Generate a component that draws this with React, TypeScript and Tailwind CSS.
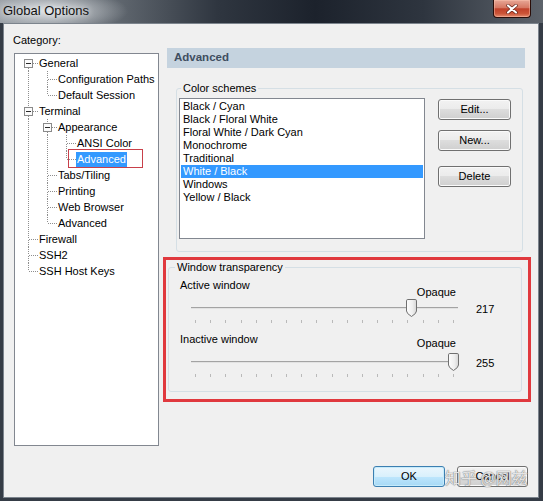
import React from "react";

type Row = {
  t: string;
  l: number;
  exp?: boolean;
  next: boolean;
  anc: boolean[];
  first?: boolean;
  sel?: boolean;
};

const ROWS: Row[] = [
  { t: "General", l: 0, exp: true, next: true, anc: [], first: true },
  { t: "Configuration Paths", l: 1, next: true, anc: [true] },
  { t: "Default Session", l: 1, next: false, anc: [true] },
  { t: "Terminal", l: 0, exp: true, next: true, anc: [] },
  { t: "Appearance", l: 1, exp: true, next: true, anc: [true] },
  { t: "ANSI Color", l: 2, next: true, anc: [true, true] },
  { t: "Advanced", l: 2, next: false, anc: [true, true], sel: true },
  { t: "Tabs/Tiling", l: 1, next: true, anc: [true] },
  { t: "Printing", l: 1, next: true, anc: [true] },
  { t: "Web Browser", l: 1, next: true, anc: [true] },
  { t: "Advanced", l: 1, next: false, anc: [true] },
  { t: "Firewall", l: 0, next: true, anc: [] },
  { t: "SSH2", l: 0, next: true, anc: [] },
  { t: "SSH Host Keys", l: 0, next: false, anc: [] },
];

const DOT = { stroke: "#8e8e8e", strokeWidth: 1, strokeDasharray: "1 1", shapeRendering: "crispEdges" as const };

function GuideCell({ on }: { on: boolean }) {
  return (
    <svg width="19" height="16" className="shrink-0">
      {on && <line x1="9.5" y1="0" x2="9.5" y2="16" {...DOT} />}
    </svg>
  );
}

function OwnCell({ row }: { row: Row }) {
  return (
    <svg width="19" height="16" className="shrink-0">
      {!row.first && <line x1="9.5" y1="0" x2="9.5" y2="8" {...DOT} />}
      {row.next && <line x1="9.5" y1="9" x2="9.5" y2="16" {...DOT} />}
      <line x1={row.exp ? 14 : 10} y1="8.5" x2="19" y2="8.5" {...DOT} />
      {row.exp && (
        <g shapeRendering="crispEdges">
          <rect x="5.5" y="4.5" width="8" height="8" fill="#fbfbfb" stroke="#8a8a8a" />
          <line x1="7" y1="8.5" x2="12" y2="8.5" stroke="#2a2a2a" />
        </g>
      )}
    </svg>
  );
}

function TreeRow({ row }: { row: Row }) {
  return (
    <div className="flex h-[16px] items-center">
      <div className="w-[4px] shrink-0" />
      {row.anc.map((a, k) => (
        <GuideCell key={k} on={a} />
      ))}
      <OwnCell row={row} />
      <span
        className={
          row.sel
            ? "relative h-[15px] pl-[1px] pr-[1px] leading-[15px] whitespace-nowrap bg-[#3399ff] text-white"
            : "relative h-[15px] pl-[1px] pr-[1px] leading-[15px] whitespace-nowrap text-black"
        }
      >
        {row.t}
        {row.sel && (
          <span className="absolute left-[-8px] right-[-16px] top-[-3px] bottom-[-1px] border border-[#c8404a]" />
        )}
      </span>
    </div>
  );
}

function Btn({ children, w, primary }: { children: React.ReactNode; w: string; primary?: boolean }) {
  return (
    <div
      className={
        (primary
          ? "border-[#3c7fb1] bg-[linear-gradient(180deg,#eaf6fd_0%,#d9f0fc_50%,#bee6fd_50%,#a7d9f5_100%)] shadow-[inset_0_0_0_1px_#c6ebfb] "
          : "border-[#707070] bg-[linear-gradient(180deg,#f2f2f2_0%,#ebebeb_50%,#dddddd_50%,#cfcfcf_100%)] shadow-[inset_0_0_0_1px_#fafafa] ") +
        w +
        " h-[21px] shrink-0 rounded-[3px] border flex items-center justify-center text-[11px] text-black"
      }
    >
      {children}
    </div>
  );
}

function Thumb({ id }: { id: string }) {
  return (
    <svg width="11" height="18" viewBox="0 0 11 18">
      <defs>
        <linearGradient id={id} x1="0" y1="0" x2="1" y2="0">
          <stop offset="0" stopColor="#fefefe" />
          <stop offset="0.6" stopColor="#eeeeee" />
          <stop offset="1" stopColor="#d6d6d6" />
        </linearGradient>
      </defs>
      <path
        d="M1.8 0.5 H9.2 Q10.5 0.5 10.5 1.8 V12 Q10.5 14.5 5.5 17.5 Q0.5 14.5 0.5 12 V1.8 Q0.5 0.5 1.8 0.5 Z"
        fill={`url(#${id})`}
        stroke="#707070"
      />
    </svg>
  );
}

function SliderBlock({
  label,
  value,
  opaqueMt,
  rowMt,
  id,
}: {
  label: string;
  value: number;
  opaqueMt: string;
  rowMt: string;
  id: string;
}) {
  const center = 6 + ((value - 20) / 235) * 258;
  return (
    <div className="flex flex-col">
      <div className="flex w-[276px] items-start">
        <span className="leading-[14px]">{label}</span>
        <span className={"ml-auto leading-[13px] " + opaqueMt}>Opaque</span>
      </div>
      <div className={"flex items-center " + rowMt}>
        <div className="relative ml-[9px] h-[18px] w-[271px] shrink-0">
          <div className="ml-[2px] mt-[8px] h-[2px] w-[267px] border-t border-[#a3a3a3] bg-[#e2e2e2]" />
          <div className="absolute top-0" style={{ left: center - 5.5 }}>
            <Thumb id={id} />
          </div>
        </div>
        <span className="ml-[16px] pt-[2px] leading-[14px]">{value}</span>
      </div>
      <div className="ml-[9px] mt-[3px] flex h-[3px] w-[271px] justify-between px-[6px]">
        {Array.from({ length: 18 }).map((_, i) => (
          <div key={i} className="h-[3px] w-px bg-[#b9b9b9]" />
        ))}
      </div>
    </div>
  );
}

const SCHEMES = [
  "Black / Cyan",
  "Black / Floral White",
  "Floral White / Dark Cyan",
  "Monochrome",
  "Traditional",
  "White / Black",
  "Windows",
  "Yellow / Black",
];

export default function App() {
  return (
    <div className="flex h-[501px] w-[543px] flex-col overflow-hidden bg-[#353c46] [font-family:'Liberation_Sans',Arial,sans-serif] text-[11px] text-black">
      {/* Title bar */}
      <div className="flex h-[23px] shrink-0 items-start bg-[radial-gradient(ellipse_80px_22px_at_48px_11px,rgba(226,230,233,0.95),rgba(226,230,233,0)),linear-gradient(90deg,#8a9097_0%,#5f666e_22%,#2f3640_40%,#1c222c_58%,#2e353f_78%,#5d636b_100%)]">
        <span className="pl-[3px] pt-[2px] text-[13px] leading-[17px] text-[#111] [text-shadow:0_0_6px_rgba(255,255,255,0.9)]">
          Global Options
        </span>
        <div className="ml-auto mr-[12px] flex h-[18px] w-[38px] items-center justify-center rounded-b-[4px] border border-t-0 border-[#2a0d08] bg-[linear-gradient(180deg,#e7a796_0%,#d67863_45%,#c0412a_52%,#cc5538_80%,#e48c70_100%)] shadow-[inset_0_0_0_1px_rgba(255,200,180,0.45)]">
          <svg width="12" height="10" viewBox="0 0 12 10">
            <path d="M2 1.5 L10 8.5 M10 1.5 L2 8.5" stroke="#5a1a10" strokeWidth="3.4" strokeLinecap="round" />
            <path d="M2 1.5 L10 8.5 M10 1.5 L2 8.5" stroke="#ffffff" strokeWidth="2.2" strokeLinecap="round" />
          </svg>
        </div>
      </div>

      {/* Body */}
      <div className="relative mb-[3px] ml-[3px] mr-[4px] flex flex-1 flex-col border border-[#7c848d] bg-[#f0f0f0]">
        <div className="flex items-start">
          {/* Left column */}
          <div className="flex flex-col pl-[9px] pt-[9px]">
            <span className="leading-[14px]">Category:</span>
            <div className="ml-[1px] mt-[6px] h-[393px] w-[145px] border border-[#828790] bg-white pt-[1px]">
              {ROWS.map((r, i) => (
                <TreeRow key={i} row={r} />
              ))}
            </div>
          </div>

          {/* Right column */}
          <div className="ml-[4px] flex w-[368px] flex-col pt-[24px]">
            <div className="ml-[4px] flex h-[20px] w-[358px] items-center bg-[#c5d3df] pl-[7px] text-[11.5px] font-bold text-[#3f4e5f]">
              Advanced
            </div>

            <fieldset className="ml-[13px] mt-[13px] w-[347px] rounded-[3px] border border-[#d5dfe5]">
              <legend className="ml-[4px] px-[2px] leading-[14px]">Color schemes</legend>
              <div className="flex items-start pb-[12px] pl-[2px] pt-[3px]">
                <div className="h-[141px] w-[246px] shrink-0 border border-[#828790] bg-white pt-[1px]">
                  {SCHEMES.map((s) => (
                    <div
                      key={s}
                      className={
                        s === "White / Black"
                          ? "mx-[1px] h-[13px] bg-[#3399ff] pl-[2px] leading-[13px] text-white"
                          : "mx-[1px] h-[13px] pl-[2px] leading-[13px]"
                      }
                    >
                      {s}
                    </div>
                  ))}
                </div>
                <div className="ml-[13px] mt-[1px] flex flex-col">
                  <Btn w="w-[73px]">Edit...</Btn>
                  <div className="mt-[10px]">
                    <Btn w="w-[73px]">New...</Btn>
                  </div>
                  <div className="mt-[15px]">
                    <Btn w="w-[73px]">Delete</Btn>
                  </div>
                </div>
              </div>
            </fieldset>

            <div className="mt-[5px] w-[368px] border-[3px] border-[#e0393e] pb-[7px] pl-[2px] pr-[6px]">
              <fieldset className="rounded-[3px] border border-[#d5dfe5]">
                <legend className="ml-[6px] px-[2px] leading-[14px]">Window transparency</legend>
                <div className="flex flex-col pb-[14px] pl-[11px] pt-[4px]">
                  <SliderBlock label="Active window" value={217} opaqueMt="mt-[8px]" rowMt="mt-0" id="thA" />
                  <div className="mt-[9px]">
                    <SliderBlock label="Inactive window" value={255} opaqueMt="mt-[5px]" rowMt="mt-[3px]" id="thB" />
                  </div>
                </div>
              </fieldset>
            </div>
          </div>
        </div>

        {/* Bottom buttons */}
        <div className="mt-[20px] flex justify-end gap-[12px] pr-[10px]">
          <Btn w="w-[72px]" primary>
            OK
          </Btn>
          <Btn w="w-[71px]">Cancel</Btn>
        </div>

        {/* Watermark */}
        <div className="pointer-events-none absolute left-[441px] top-[443px] whitespace-nowrap [font-family:'Noto_Sans_CJK_SC',sans-serif] text-[16px] leading-[20px] text-white/80 [text-shadow:0_0_1px_#777,0_0_1px_#777]">
          知乎 @网兹
        </div>
      </div>
    </div>
  );
}
